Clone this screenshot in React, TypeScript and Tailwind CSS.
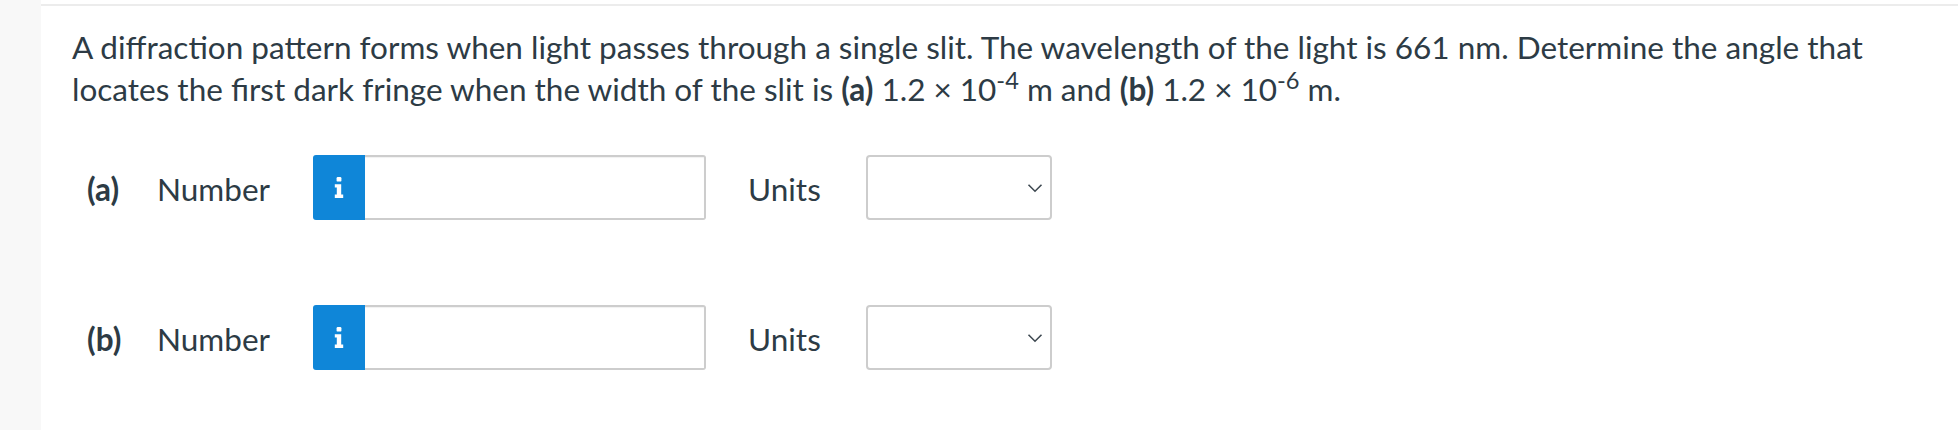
import React from "react";

function InfoGlyph() {
  return (
    <svg width="10" height="21" viewBox="0 0 10 21" fill="#fff" aria-hidden="true">
      <rect x="2.6" y="0" width="4.8" height="4.6" rx="1.2" />
      <path d="M0.8 7.2H7.2V17.6H9.2V21H0.8V17.6H2.8V10.6H0.8Z" />
    </svg>
  );
}

function Chevron() {
  return (
    <svg width="16" height="10" viewBox="0 0 16 10" fill="none" aria-hidden="true">
      <path d="M1.5 1.8L8 8.2L14.5 1.8" stroke="#3d4850" strokeWidth="1.6" />
    </svg>
  );
}

function AnswerRow({ part }: { part: string }) {
  return (
    <div className="flex items-center text-[31.5px] leading-none">
      <span className="ml-[15px] w-[70px] pt-[4px] font-bold">({part})</span>
      <span className="w-[156px] pt-[4px]">Number</span>
      <div className="flex h-[65px]">
        <div className="flex w-[52px] items-center justify-center rounded-l-[3px] bg-[#0f86d8]">
          <InfoGlyph />
        </div>
        <div className="w-[341px] rounded-r-[3px] border-2 border-l-0 border-[#cdcdcd] bg-white shadow-[inset_0_1px_1px_rgba(0,0,0,0.06)]" />
      </div>
      <span className="ml-[42px] w-[118px] pt-[4px]">Units</span>
      <div className="flex h-[65px] w-[186px] items-center justify-end rounded-[4px] border-2 border-[#cdcdcd] bg-white pr-[7px]">
        <Chevron />
      </div>
    </div>
  );
}

export default function App() {
  return (
    <div className="flex min-h-[430px] bg-white font-['Lato','Liberation_Sans',sans-serif] text-[#2d3b45]">
      <aside className="w-[41px] shrink-0 bg-[#f8f8f8]" />
      <main className="flex-1 pt-[4px]">
        <div className="border-t-2 border-[#ececec] pl-[31px] pr-[60px]">
          <p className="mt-[20px] text-[31.5px] leading-[42px]">
            A diffraction pattern forms when light passes through a single slit. The wavelength of the light is
            661 nm. Determine the angle that locates the first dark fringe when the width of the slit is{" "}
            <b>(a)</b> 1.2 × 10<sup>-4</sup> m and <b>(b)</b> 1.2 × 10<sup>-6</sup> m.
          </p>
          <div className="mt-[45px] flex flex-col gap-[85px]">
            <AnswerRow part="a" />
            <AnswerRow part="b" />
          </div>
        </div>
      </main>
    </div>
  );
}
